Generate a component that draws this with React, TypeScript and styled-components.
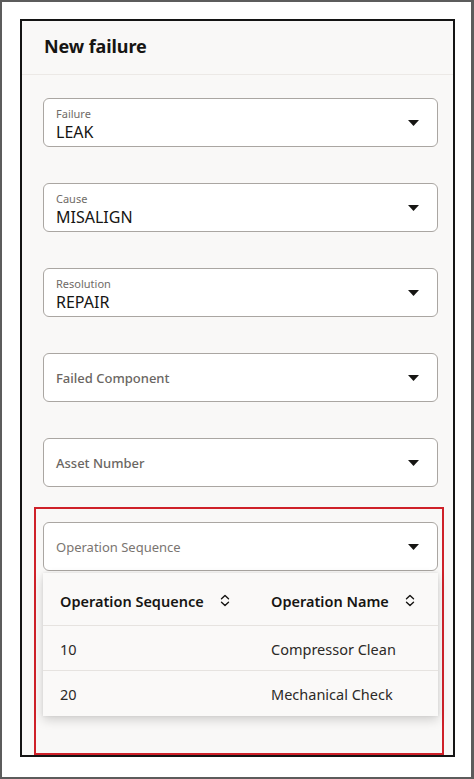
import React from "react";
import styled, { createGlobalStyle } from "styled-components";

const Global = createGlobalStyle`
  html, body { margin: 0; padding: 0; background: #ffffff; }
  body { font-family: "Noto Sans", "Open Sans", Arial, sans-serif; color: #161513; }
  * { box-sizing: border-box; }
`;

const Frame = styled.div`
  width: 474px;
  height: 779px;
  border: 2px solid #5c5c5c;
  border-right-width: 3px;
  background: #ffffff;
  padding: 17px 0 0 18px;
`;

const Panel = styled.div`
  width: 435px;
  height: 738px;
  border: 2px solid #141414;
  background: #f9f8f7;
  display: flex;
  flex-direction: column;
`;

const Header = styled.div`
  height: 54px;
  padding: 0 0 3px 22px;
  display: flex;
  align-items: center;
  border-bottom: 1px solid #ece9e6;
  flex-shrink: 0;
`;

const Title = styled.h1`
  margin: 0;
  font-size: 18px;
  font-weight: 700;
  color: #161513;
  letter-spacing: -0.1px;
`;

const Body = styled.div`
  flex: 1;
  display: flex;
  flex-direction: column;
  padding: 23px 15px 0 21px;
`;

const FieldBox = styled.div<{ $spaced?: boolean }>`
  height: 49px;
  flex-shrink: 0;
  background: #ffffff;
  border: 1px solid #aaa6a2;
  border-radius: 6px;
  display: flex;
  align-items: center;
  padding: 0 18px 0 12px;
  margin-bottom: ${(p) => (p.$spaced ? "36px" : "0")};
`;

const FieldText = styled.div`
  flex: 1;
  display: flex;
  flex-direction: column;
  padding-top: 3px;
`;

const Label = styled.span`
  display: block;
  height: 15px;
  font-size: 11px;
  line-height: 15px;
  color: #6f6b67;
`;

const Value = styled.span`
  display: block;
  height: 22px;
  font-size: 16px;
  line-height: 22px;
  color: #161513;
`;

const Placeholder = styled.span<{ $light?: boolean }>`
  flex: 1;
  font-size: 13px;
  font-weight: ${(p) => (p.$light ? 400 : 500)};
  color: ${(p) => (p.$light ? "#7a7571" : "#6a6662")};
`;

const Highlight = styled.div`
  flex: 1;
  margin: 20px -6px 0 -9px;
  border: 2px solid #cf2129;
  padding: 13px 4px 0 7px;
  display: flex;
  flex-direction: column;
`;

const Dropdown = styled.div`
  margin-top: 2px;
  background: #faf9f8;
  box-shadow: 0 4px 10px rgba(0, 0, 0, 0.16), 0 0 3px rgba(0, 0, 0, 0.08);
  display: grid;
  grid-template-columns: 211px 1fr;
`;

const HeadCell = styled.div`
  height: 53px;
  padding: 3px 0 0 17px;
  display: flex;
  align-items: center;
  gap: 16px;
  font-size: 14.5px;
  font-weight: 600;
  color: #161513;
  border-bottom: 1px solid #e6e3e0;
`;

const Cell = styled.div<{ $last?: boolean }>`
  height: 45px;
  padding: 1px 0 0 17px;
  display: flex;
  align-items: center;
  font-size: 14.5px;
  color: #2c2a27;
  border-bottom: ${(p) => (p.$last ? "none" : "1px solid #e6e3e0")};
`;

const Caret = () => (
  <svg width="11" height="6" viewBox="0 0 11 6" aria-hidden="true">
    <polygon points="0,0 11,0 5.5,6" fill="#161513" />
  </svg>
);

const SortIcon = () => (
  <svg width="10" height="13" viewBox="0 0 10 13" aria-hidden="true">
    <path
      d="M1.5 4.8 L5 1.5 L8.5 4.8 M1.5 8.2 L5 11.5 L8.5 8.2"
      fill="none"
      stroke="#161513"
      strokeWidth="1.4"
      strokeLinecap="round"
      strokeLinejoin="round"
    />
  </svg>
);

const fields = [
  { label: "Failure", value: "LEAK" },
  { label: "Cause", value: "MISALIGN" },
  { label: "Resolution", value: "REPAIR" },
];

const rows = [
  { seq: "10", name: "Compressor Clean" },
  { seq: "20", name: "Mechanical Check" },
];

export default function App() {
  return (
    <>
      <Global />
      <Frame>
        <Panel>
          <Header>
            <Title>New failure</Title>
          </Header>
          <Body>
            {fields.map((f) => (
              <FieldBox key={f.label} $spaced>
                <FieldText>
                  <Label>{f.label}</Label>
                  <Value>{f.value}</Value>
                </FieldText>
                <Caret />
              </FieldBox>
            ))}
            <FieldBox $spaced>
              <Placeholder>Failed Component</Placeholder>
              <Caret />
            </FieldBox>
            <FieldBox>
              <Placeholder>Asset Number</Placeholder>
              <Caret />
            </FieldBox>
            <Highlight>
              <FieldBox>
                <Placeholder $light>Operation Sequence</Placeholder>
                <Caret />
              </FieldBox>
              <Dropdown>
                <HeadCell>
                  Operation Sequence
                  <SortIcon />
                </HeadCell>
                <HeadCell>
                  Operation Name
                  <SortIcon />
                </HeadCell>
                {rows.map((r, i) => (
                  <React.Fragment key={r.seq}>
                    <Cell $last={i === rows.length - 1}>{r.seq}</Cell>
                    <Cell $last={i === rows.length - 1}>{r.name}</Cell>
                  </React.Fragment>
                ))}
              </Dropdown>
            </Highlight>
          </Body>
        </Panel>
      </Frame>
    </>
  );
}
